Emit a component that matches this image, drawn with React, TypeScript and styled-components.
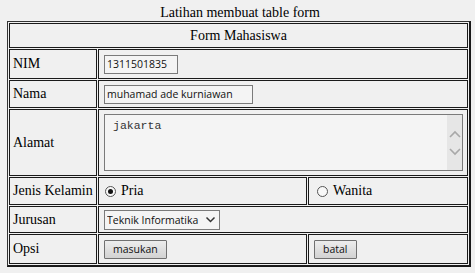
import styled, { createGlobalStyle } from "styled-components";

const GlobalStyle = createGlobalStyle`
  html, body {
    margin: 0;
    padding: 0;
    background: #f0f0f0;
  }
  body {
    font-family: "Liberation Serif", "Times New Roman", serif;
    color: #000;
  }
`;

const App = () => {
  return (
    <Page>
      <GlobalStyle />
      <FormTable>
        <Caption>Latihan membuat table form</Caption>
        <colgroup>
          <Col $w={88} />
          <Col $w={209} />
          <Col $w={160} />
        </colgroup>
        <tbody>
          <Row $h={25}>
            <HeadCell colSpan={3}>Form Mahasiswa</HeadCell>
          </Row>
          <Row $h={30}>
            <Label>NIM</Label>
            <Value colSpan={2}>
              <TextInput $w={74} defaultValue="1311501835" />
            </Value>
          </Row>
          <Row $h={28}>
            <Label>Nama</Label>
            <Value colSpan={2}>
              <TextInput $w={149} defaultValue="muhamad ade kurniawan" />
            </Value>
          </Row>
          <Row $h={67}>
            <Label>Alamat</Label>
            <Value colSpan={2}>
              <AreaBox>
                <Area defaultValue="jakarta" />
                <ScrollBar>
                  <svg width="12" height="8" viewBox="0 0 12 8">
                    <path d="M1 7 L6 2 L11 7" fill="none" stroke="#a8a8a8" strokeWidth="1.6" />
                  </svg>
                  <svg width="12" height="8" viewBox="0 0 12 8">
                    <path d="M1 1 L6 6 L11 1" fill="none" stroke="#a8a8a8" strokeWidth="1.6" />
                  </svg>
                </ScrollBar>
              </AreaBox>
            </Value>
          </Row>
          <Row $h={28}>
            <Label>Jenis Kelamin</Label>
            <Value>
              <RadioLabel>
                <Radio type="radio" name="jk" defaultChecked />
                Pria
              </RadioLabel>
            </Value>
            <Value $pad={7}>
              <RadioLabel>
                <Radio type="radio" name="jk" />
                Wanita
              </RadioLabel>
            </Value>
          </Row>
          <Row $h={27}>
            <Label>Jurusan</Label>
            <Value colSpan={2}>
              <SelectBox>
                <Select defaultValue="ti">
                  <option value="ti">Teknik Informatika</option>
                  <option value="si">Sistem Informasi</option>
                </Select>
                <svg width="11" height="8" viewBox="0 0 11 8">
                  <path d="M1.5 1.5 L5.5 5.5 L9.5 1.5" fill="none" stroke="#333" strokeWidth="1.5" />
                </svg>
              </SelectBox>
            </Value>
          </Row>
          <Row $h={30}>
            <Label>Opsi</Label>
            <Value>
              <Button type="button">masukan</Button>
            </Value>
            <Value>
              <Button type="button">batal</Button>
            </Value>
          </Row>
        </tbody>
      </FormTable>
    </Page>
  );
};
export default App;

const Page = styled.div`
  width: 475px;
  height: 273px;
  padding: 4px 0 0 7px;
  box-sizing: border-box;
`;

const FormTable = styled.table`
  width: 463px;
  border-collapse: separate;
  border-spacing: 1px;
  border-top: 1px solid #333;
  border-left: 1px solid #333;
  border-right: 2px solid #1a1a1a;
  border-bottom: 2px solid #1a1a1a;
  font-size: 14px;
  table-layout: fixed;
`;

const Caption = styled.caption`
  font-size: 14px;
  line-height: 17px;
  text-align: center;
  padding-left: 2px;
`;

const Col = styled.col<{ $w: number }>`
  width: ${(p) => p.$w}px;
`;

const Row = styled.tr<{ $h: number }>`
  height: ${(p) => p.$h}px;
`;

const Cell = styled.td`
  border: 1px solid #1a1a1a;
  vertical-align: middle;
  padding: 0;
  box-sizing: border-box;
  overflow: hidden;
`;

const HeadCell = styled(Cell)`
  text-align: center;
`;

const Label = styled(Cell)`
  padding-left: 3px;
  white-space: nowrap;
`;

const Value = styled(Cell)<{ $pad?: number }>`
  padding-left: ${(p) => p.$pad ?? 5}px;
`;

const TextInput = styled.input<{ $w: number }>`
  display: block;
  width: ${(p) => p.$w}px;
  height: 19px;
  box-sizing: border-box;
  border: 1px solid #7a7a7a;
  background: #f4f4f4;
  padding: 0 2px;
  font-family: "Open Sans", "Liberation Sans", Arial, sans-serif;
  font-size: 10.5px;
  color: #111;
  outline: none;
`;

const AreaBox = styled.div`
  display: flex;
  width: 359px;
  height: 57px;
  box-sizing: border-box;
  border: 1px solid #7a7a7a;
  background: #f4f4f4;
`;

const Area = styled.textarea`
  flex: 1;
  border: none;
  background: transparent;
  resize: none;
  overflow: hidden;
  padding: 4px 8px;
  font-family: "Liberation Mono", "Courier New", monospace;
  font-size: 11.5px;
  color: #333;
  outline: none;
`;

const ScrollBar = styled.div`
  width: 15px;
  background: #e6e6e6;
  display: flex;
  flex-direction: column;
  align-items: center;
  justify-content: center;
  gap: 10px;
`;

const RadioLabel = styled.label`
  display: flex;
  align-items: center;
  gap: 5px;
  font-size: 14px;
`;

const Radio = styled.input`
  appearance: none;
  margin: 0 0 0 1px;
  width: 11px;
  height: 11px;
  border: 1px solid #555;
  border-radius: 50%;
  background: #f8f8f8;
  box-sizing: border-box;
  display: grid;
  place-items: center;

  &:checked::after {
    content: "";
    width: 5px;
    height: 5px;
    border-radius: 50%;
    background: #111;
  }
`;

const SelectBox = styled.div`
  display: flex;
  align-items: center;
  width: 116px;
  height: 20px;
  box-sizing: border-box;
  border: 1px solid #7a7a7a;
  background: #f4f4f4;
  padding-right: 3px;
`;

const Select = styled.select`
  appearance: none;
  flex: 1;
  min-width: 0;
  border: none;
  background: transparent;
  padding: 0 0 0 2px;
  font-family: "Open Sans", "Liberation Sans", Arial, sans-serif;
  font-size: 10.5px;
  color: #111;
  outline: none;
`;

const Button = styled.button`
  display: block;
  height: 19px;
  padding: 0 8px;
  border: 1px solid #707070;
  border-radius: 1px;
  background: linear-gradient(#ededed, #d2d2d2);
  font-family: "Open Sans", "Liberation Sans", Arial, sans-serif;
  font-size: 10.5px;
  color: #111;
`;
